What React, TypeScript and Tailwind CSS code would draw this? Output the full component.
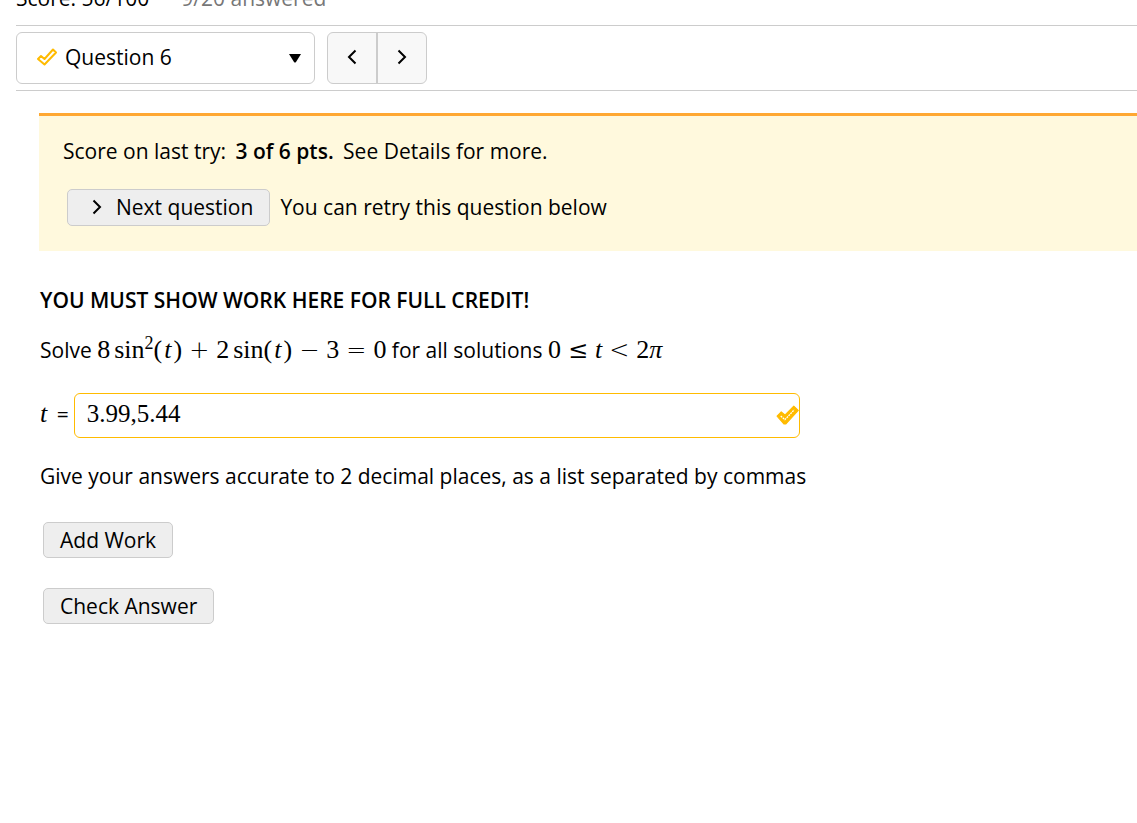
import { useState } from "react";
import type { ReactNode } from "react";

function CheckMark() {
  return (
    <svg viewBox="0 0 22 18" width="22" height="18" aria-hidden="true">
      <path d="M2 11 L5 8 L8.5 11 L17 1.5 L20 4.5 L8.5 16.5 Z" fill="none" stroke="#ffbb00" strokeWidth="2" strokeLinejoin="round" />
    </svg>
  );
}

function FilledCheckMark() {
  return (
    <svg viewBox="0 0 22 19" width="23" height="20" aria-hidden="true">
      <path d="M1 10.5 L5 6.5 L8.5 9.5 L17 1 L21.3 5 L9.5 18 L7.5 18 Z" fill="#ffbb00" stroke="#ffbb00" strokeLinejoin="round" />
      <path d="M4.5 10.5 L8.5 14 L17.5 4.5" fill="none" stroke="#fff" strokeWidth="1.2" strokeDasharray="1.8 0.8" />
    </svg>
  );
}

function Chevron({ left = false }: { left?: boolean }) {
  return (
    <svg viewBox="0 0 10 16" width="10" height="16" fill="none" stroke="#000" strokeWidth="2" aria-hidden="true">
      <path d={left ? "M8.5 1.5 L2 8 L8.5 14.5" : "M1.5 1.5 L8 8 L1.5 14.5"} />
    </svg>
  );
}

function MathText({ children }: { children: ReactNode }) {
  return <span className="font-['Liberation_Serif',serif] text-[26px] leading-none">{children}</span>;
}

function Op({ children }: { children: ReactNode }) {
  return <span className="mx-[7px] font-['DejaVu_Sans',sans-serif] text-2xl leading-none font-extralight">{children}</span>;
}

const button =
  "flex cursor-pointer items-center rounded-[5px] border border-[#ccc] bg-[#eee]";

export default function App() {
  const [answer, setAnswer] = useState("3.99,5.44");
  return (
    <div className="overflow-x-hidden bg-white pl-4 font-['Open_Sans',sans-serif] text-[21px] leading-7 text-black">
      <header className="flex h-[26px] items-end gap-8 overflow-hidden border-b border-[#ccc] pb-[13px]">
        <span>Score: 56/100</span>
        <span className="text-[#777]">9/20 answered</span>
      </header>

      <nav className="flex gap-3 border-b border-[#ccc] py-1.5" aria-label="Questions">
        <div className="relative w-[299px]">
          <select aria-label="Question" className="h-[52px] w-full appearance-none rounded-md border border-[#ccc] bg-white pb-0.5 pl-12">
            <option>Question 6</option>
          </select>
          <span className="pointer-events-none absolute top-4 left-5"><CheckMark /></span>
          <svg className="pointer-events-none absolute top-[22px] right-3.5" viewBox="0 0 12 9" width="12" height="9" aria-hidden="true">
            <path d="M0 0 H12 L7 8 Q6 9 5 8 Z" />
          </svg>
        </div>
        <div className="flex h-[52px] w-[100px] overflow-hidden rounded-md border border-[#ccc] bg-[#f8f8f8]">
          <button aria-label="Previous question" className="flex flex-1 items-center justify-center border-r-2 border-[#ccc] pb-0.5"><Chevron left /></button>
          <button aria-label="Following question" className="flex flex-1 items-center justify-center pb-0.5"><Chevron /></button>
        </div>
      </nav>

      <main className="pt-[22px] pl-6">
        <section className="-ml-px border-t-3 border-[#ffa832] bg-[#fff9dd] px-6 pt-[21px] pb-[25px]">
          <p>Score on last try: <strong className="mx-1 font-semibold">3 of 6 pts.</strong> See Details for more.</p>
          <div className="mt-6 ml-1 flex items-center gap-2.5">
            <button className={`${button} h-[37px] px-4 pb-0.5`}><span className="mr-3.5 ml-2"><Chevron /></span>Next question</button>
            <span className="pb-0.5">You can retry this question below</span>
          </div>
        </section>

        <p className="mt-[35px] font-semibold">YOU MUST SHOW WORK HERE FOR FULL CREDIT!</p>
        <p className="mt-[22px]">
          Solve{" "}
          <MathText>
            8<span className="ml-1">sin</span><sup className="text-[18px]">2</sup>(<i className="mx-0.5">t</i>)<Op>+</Op>2<span className="ml-1">sin</span>(<i className="mx-0.5">t</i>)<Op>−</Op>3<Op>=</Op>0
          </MathText>{" "}
          for all solutions{" "}
          <MathText>0<span className="mx-[7px] font-['DejaVu_Serif',serif] text-2xl leading-none">≤</span><i>t</i><Op>&lt;</Op>2<i>π</i></MathText>
        </p>
        <div className="mt-[29px] flex items-center gap-[5px]">
          <label htmlFor="answer" className="pb-1"><MathText><i className="mr-1">t</i></MathText> =</label>
          <div className="relative w-[726px]">
            <input id="answer" value={answer} onChange={(e) => setAnswer(e.target.value)} className="block h-[45px] w-full rounded-md border border-[#ffbb00] pr-8 pb-1 pl-3 font-['Liberation_Serif',serif] text-[25px]" />
            <span className="pointer-events-none absolute top-3 right-px"><FilledCheckMark /></span>
          </div>
        </div>
        <p className="mt-6">Give your answers accurate to 2 decimal places, as a list separated by commas</p>
        <div className="mt-8 ml-[3px] flex flex-col items-start gap-[30px]">
          <button className={`${button} h-9 px-4`}>Add Work</button>
          <button className={`${button} h-9 px-4`}>Check Answer</button>
        </div>
      </main>
    </div>
  );
}
